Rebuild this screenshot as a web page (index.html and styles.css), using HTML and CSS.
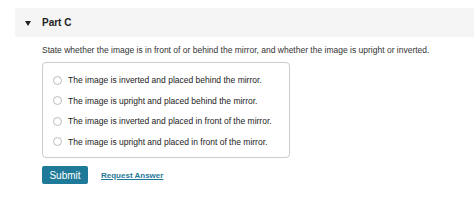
FILE: index.html
```html
<!DOCTYPE html>
<html>
<head>
<meta charset="utf-8">
<link rel="stylesheet" href="styles.css">
</head>
<body>
<div class="part">
  <div class="part-header">
    <span class="caret"></span>
    <span class="part-title">Part C</span>
  </div>
  <div class="part-body">
    <p class="prompt">State whether the image is in front of or behind the mirror, and whether the image is upright or inverted.</p>
    <div class="choices">
      <label class="choice"><span class="radio"></span><span>The image is inverted and placed behind the mirror.</span></label>
      <label class="choice"><span class="radio"></span><span>The image is upright and placed behind the mirror.</span></label>
      <label class="choice"><span class="radio"></span><span>The image is inverted and placed in front of the mirror.</span></label>
      <label class="choice"><span class="radio"></span><span>The image is upright and placed in front of the mirror.</span></label>
    </div>
    <div class="actions">
      <button class="submit">Submit</button>
      <a class="request" href="#">Request Answer</a>
    </div>
  </div>
</div>
</body>
</html>
```
FILE: styles.css
```css
html, body {
  margin: 0;
  padding: 0;
  background: #fff;
}
body {
  font-family: "Liberation Sans", Arial, sans-serif;
  color: #333;
  padding-top: 8px;
  padding-left: 15px;
}
.part-header {
  height: 29px;
  background: #f5f5f5;
  display: flex;
  align-items: center;
}
.caret {
  width: 0;
  height: 0;
  border-left: 3.5px solid transparent;
  border-right: 3.5px solid transparent;
  border-top: 5px solid #222;
  margin-left: 10px;
  margin-top: 1px;
}
.part-title {
  font-weight: bold;
  font-size: 10px;
  margin-left: 11px;
  color: #222;
}
.part-body {
  padding-left: 27px;
}
.prompt {
  margin: 0;
  padding-top: 8px;
  font-size: 8.5px;
  line-height: 11px;
  color: #333;
}
.choices {
  margin-top: 6px;
  width: 246px;
  border: 1px solid #ccc;
  border-radius: 4px;
  padding: 7px 0 5px 0;
}
.choice {
  display: flex;
  align-items: center;
  height: 20.5px;
  font-size: 8.5px;
  color: #222;
}
.radio {
  width: 9px;
  height: 9px;
  border: 1px solid #bbb;
  border-radius: 50%;
  margin-left: 10px;
  margin-right: 6px;
  box-sizing: border-box;
}
.actions {
  display: flex;
  align-items: center;
  margin-top: 8px;
}
.submit {
  width: 46px;
  height: 18px;
  padding: 0;
  border: none;
  border-radius: 2px;
  background: #1f7a99;
  color: #fff;
  font-family: "Liberation Sans", Arial, sans-serif;
  font-size: 10px;
}
.request {
  margin-left: 13px;
  font-size: 8px;
  font-weight: bold;
  color: #1f7a99;
  text-decoration: underline;
}
```
